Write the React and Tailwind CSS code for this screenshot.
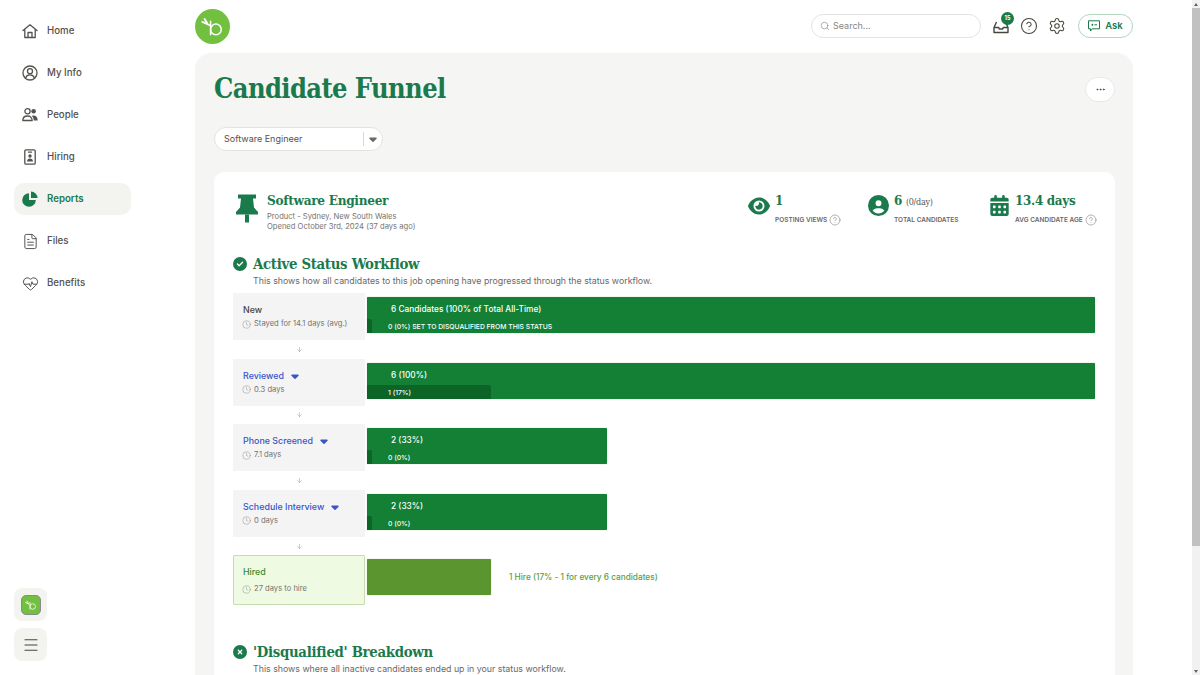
import { ArrowDown, Clock, Search, CircleHelp, Settings, Ellipsis, Menu, FileText, HeartPulse } from "lucide-react";
import { FaEye, FaCircleUser, FaCalendarDays, FaCircleCheck, FaCircleXmark, FaCaretDown } from "react-icons/fa6";

const SERIF = "font-['DejaVu_Serif_Condensed','DejaVu_Serif',serif]";

const Logo = ({ size }) => (
  <svg width={size} height={size} viewBox="0 0 36 36">
    <circle cx="18" cy="18" r="18" fill="#73c041" />
    <path d="M16 12v15" stroke="#fff" strokeWidth="1.5" fill="none" />
    <circle cx="21.5" cy="21" r="5.5" stroke="#fff" strokeWidth="1.5" fill="none" />
    <path d="M14.6 16.5 7.5 13.2M12.7 14.7 9.8 10.2" stroke="#fff" strokeWidth="1.8" strokeLinecap="round" />
  </svg>
);

const Outline = ({ children }) => (
  <svg width="16" height="16" viewBox="0 0 16 16" fill="none" stroke="currentColor" strokeWidth="1.3" strokeLinejoin="round" strokeLinecap="round">
    {children}
  </svg>
);

const nav = [
  {
    label: "Home",
    icon: (
      <Outline>
        <path d="M1 7.5 8 1.8l7 5.7M2.8 6.3V14.5h10.4V6.3M6 14.5V9.5h4v5" />
      </Outline>
    ),
  },
  {
    label: "My Info",
    icon: (
      <Outline>
        <circle cx="8" cy="8" r="7" />
        <circle cx="8" cy="6.2" r="2.5" />
        <path d="M3.5 12.9c.8-2 2.5-3 4.5-3s3.7 1 4.5 3" />
      </Outline>
    ),
  },
  {
    label: "People",
    icon: (
      <Outline>
        <circle cx="5.5" cy="4.2" r="2.6" />
        <path d="M.8 13.5c0-3 2-4.5 4.7-4.5s4.7 1.5 4.7 4.5z" />
        <circle cx="11.6" cy="4.2" r="2.3" fill="currentColor" stroke="none" />
        <path d="M11.5 8.6c2.4 0 4.2 1.6 4.2 4.9h-4c0-2-.5-3.4-1.8-4.5.5-.3 1-.4 1.6-.4z" fill="currentColor" stroke="none" />
      </Outline>
    ),
  },
  {
    label: "Hiring",
    icon: (
      <Outline>
        <rect x="2.8" y="0.8" width="10.4" height="14.4" rx="1.2" />
        <path d="M6.5 3.2h3" />
        <circle cx="8" cy="7" r="1.7" fill="currentColor" stroke="none" />
        <path d="M5 12.5c0-2 1.3-3 3-3s3 1 3 3z" fill="currentColor" stroke="none" />
      </Outline>
    ),
  },
  {
    label: "Reports",
    icon: (
      <svg width="16" height="16" viewBox="0 0 16 16" fill="currentColor">
        <path d="M7 2.2A6.8 6.8 0 1 0 13.8 9H7z" />
        <path d="M9 .5A6.5 6.5 0 0 1 15.5 7H9z" />
      </svg>
    ),
    active: true,
  },
  { label: "Files", icon: <FileText size={17} strokeWidth={1.4} className="-mx-[0.5px]" /> },
  { label: "Benefits", icon: <HeartPulse size={17} strokeWidth={1.4} className="-mx-[0.5px]" /> },
];

const rows = [
  { name: "New", time: "Stayed for 14.1 days (avg.)", width: 728, top: "6 Candidates (100% of Total All-Time)", bottom: "0 (0%) SET TO DISQUALIFIED FROM THIS STATUS", band: 5 },
  { name: "Reviewed", link: true, time: "0.3 days", width: 728, top: "6 (100%)", bottom: "1 (17%)", band: 124 },
  { name: "Phone Screened", link: true, time: "7.1 days", width: 240, top: "2 (33%)", bottom: "0 (0%)", band: 5 },
  { name: "Schedule Interview", link: true, time: "0 days", width: 240, top: "2 (33%)", bottom: "0 (0%)", band: 5 },
];

const Stat = ({ icon, value, extra, label, help, className }) => (
  <div className={`flex gap-[5px] ${className}`}>
    <div className="text-[#1b7a4c] pt-[3px]">{icon}</div>
    <div>
      <div className={`${SERIF} h-[18px] text-[13.3px] leading-[18px] font-bold text-[#1b7a4c] whitespace-nowrap tracking-[-0.3px]`}>
        {value} {extra && <span className="text-[9px] font-normal text-[#555]">{extra}</span>}
      </div>
      <div className="mt-[6px] h-[10px] flex items-center gap-[2px] text-[6.5px] font-semibold text-[#6b6866] whitespace-nowrap">
        {label}
        {help && <CircleHelp size={12} strokeWidth={1} className="-mt-[2px]" />}
      </div>
    </div>
  </div>
);

const SectionTitle = ({ icon, title, desc }) => (
  <div>
    <div className="flex items-center gap-[6px]">
      <span className="text-[#1b7a4c]">{icon}</span>
      <h2 className={`${SERIF} text-[14.8px] leading-[20px] font-bold text-[#1b7a4c] tracking-[-0.3px]`}>{title}</h2>
    </div>
    <p className="ml-[20px] text-[8.8px] leading-[13px] text-[#6b6866]">{desc}</p>
  </div>
);

const TimeLine = ({ children, className }) => (
  <div className={`flex items-center gap-[3px] -ml-[1px] text-[7.6px] leading-[12px] text-[#77736f] ${className}`}>
    <Clock size={9} strokeWidth={1} />
    {children}
  </div>
);

const FunnelRow = ({ row }) => (
  <div className="flex gap-[2px]">
    <div className="w-[132px] h-[47px] shrink-0 bg-[#f4f4f4] pl-[10px] pt-[11px]">
      <div className={`flex items-center gap-[5px] text-[8.9px] leading-[12px] font-medium ${row.link ? "text-[#3a55c8]" : "text-[#48453f]"}`}>
        {row.name}
        {row.link && <FaCaretDown size={12} />}
      </div>
      <TimeLine className="mt-[2px]">{row.time}</TimeLine>
    </div>
    <div className="pt-[4px]">
      <div className="relative h-[36px] rounded-[1px] bg-[#138036] text-white shadow-[0_0_1px_#6fa57f]" style={{ width: row.width }}>
        <div className="pl-[24px] pt-[6px] text-[8.3px] leading-[12px] font-medium">{row.top}</div>
        <div className="absolute left-0 bottom-0 h-[14px] rounded-tr-[2px] bg-[#0d6427]" style={{ width: row.band }} />
        <div className="absolute left-[21px] bottom-0 text-[6.8px] leading-[13px] font-medium whitespace-nowrap">{row.bottom}</div>
      </div>
    </div>
  </div>
);

const Arrow = () => (
  <div className="w-[132px] h-[18.6px] flex items-center justify-center text-[#8b8b8b]">
    <ArrowDown size={7} strokeWidth={1.5} />
  </div>
);

export default function App() {
  return (
    <div className="flex w-[1200px] h-[675px] overflow-hidden bg-white font-['Inter',sans-serif]">
      <aside className="w-[195px] shrink-0 flex flex-col justify-between px-[14px] pt-[15px] pb-[14px]">
        <nav className="flex flex-col gap-[10px]">
          {nav.map((item) => (
            <div
              key={item.label}
              className={`w-[117px] h-[32px] flex items-center gap-[9px] pl-[8px] rounded-[10px] text-[9.7px] ${item.active ? "bg-[#f3f3f0] text-[#1b7a4c] font-semibold" : "text-[#55514d] font-medium"}`}
            >
              {item.icon}
              {item.label}
            </div>
          ))}
        </nav>
        <div className="flex flex-col gap-[7px]">
          <div className="w-[33px] h-[33px] rounded-[8px] bg-[#f3f3f0] flex items-center justify-center">
            <div className="w-[20px] h-[20px] rounded-[5px] bg-[#73c041] border border-[#8a8a8a] overflow-hidden flex items-center justify-center">
              <Logo size={18} />
            </div>
          </div>
          <div className="w-[33px] h-[33px] rounded-[8px] bg-[#f3f3f0] flex items-center justify-center text-[#48453f]">
            <Menu size={18} strokeWidth={1.5} />
          </div>
        </div>
      </aside>

      <main className="w-[938px] shrink-0 flex flex-col">
        <header className="h-[53px] shrink-0 flex items-center">
          <Logo size={35} />
          <div className="ml-auto flex items-center -mt-[1px]">
            <div className="w-[170px] h-[24px] rounded-full border border-[#e3e3e0] flex items-center gap-[3px] pl-[8px] text-[9px] text-[#8a8682]">
              <Search size={10} strokeWidth={1.5} />
              Search...
            </div>
            <div className="relative ml-[11px] text-[#48453f]">
              <svg width="18" height="18" viewBox="0 0 18 18" fill="none" stroke="currentColor" strokeWidth="1.4" strokeLinejoin="round" className="block">
                <path d="M4.5 5 2 10.5V15.5h14v-5L14 6M2 10.5h4.5l1 1.5h3l1-1.5H16" />
              </svg>
              <span className="absolute -top-[5px] left-[9px] w-[13px] h-[13px] rounded-full bg-[#1b7a4c] text-white text-[5.5px] font-bold flex items-center justify-center">15</span>
            </div>
            <CircleHelp size={18} strokeWidth={1.4} className="ml-[10px] text-[#48453f]" />
            <Settings size={18} strokeWidth={1.4} className="ml-[10px] text-[#48453f]" />
            <div className="ml-[12px] w-[55px] h-[24px] rounded-full border border-[#b5d5c0] flex items-center justify-center gap-[5px] text-[#1b7a4c] text-[9.5px] font-semibold">
              <svg width="12" height="12" viewBox="0 0 12 12" fill="none" stroke="currentColor" strokeWidth="1">
                <path d="M.5.8h11v8H4.2L2.5 11V8.8h-2z" />
                <path d="M6.5 4.8h2.500M3.500 4.800h1.800M4.400 3.800v2" />
              </svg>
              Ask
            </div>
          </div>
        </header>

        <section className="flex-1 rounded-t-[16px] bg-[#f5f5f3] pl-[19px] pr-[18px] pt-[24px]">
          <div className="h-[25px] flex items-center justify-between">
            <h1 className={`${SERIF} -mt-[3px] text-[27px] font-bold text-[#1b7a4c] leading-none tracking-[-0.6px]`}>Candidate Funnel</h1>
            <div className="w-[30px] h-[25px] rounded-full bg-white border border-[#e8e8e6] flex items-center justify-center text-[#48453f]">
              <Ellipsis size={11} />
            </div>
          </div>

          <div className="mt-[25px] w-[169px] h-[24px] rounded-full bg-white border border-[#e3e3e0] flex items-center pl-[9px] text-[9px] text-[#55514d]">
            <span className="flex-1">Software Engineer</span>
            <span className="h-[14px] w-[19px] border-l border-[#d8d8d5] flex items-center justify-center">
              <FaCaretDown size={12} className="text-[#6b6866]" />
            </span>
          </div>

          <div className="mt-[21px] rounded-t-[10px] bg-white pl-[19px] pr-[20px] pt-[20px] h-[503px] overflow-hidden">
            <div className="flex justify-between">
              <div className="flex gap-[9px] pl-[3px]">
                <svg width="22" height="29" viewBox="0 0 22 29" fill="#1b7a4c" className="shrink-0 mt-[2px]">
                  <path d="M2 .5h18v4h-3l1 9 4 4.500v2.500H0V18l4-4.500 1-9H2z" />
                  <path d="M9 20.500h4V28.500H9z" />
                </svg>
                <div>
                  <div className={`${SERIF} text-[13.5px] leading-[16px] font-bold text-[#1b7a4c] tracking-[-0.3px]`}>Software Engineer</div>
                  <div className="mt-[4px] text-[7.6px] leading-[10px] text-[#77736f]">Product - Sydney, New South Wales</div>
                  <div className="text-[7.6px] leading-[10px] text-[#77736f]">Opened October 3rd, 2024 (37 days ago)</div>
                </div>
              </div>
              <div className="flex">
                <Stat className="w-[120px]" icon={<FaEye size={22} />} value="1" label="POSTING VIEWS" help />
                <Stat className="w-[121px]" icon={<FaCircleUser size={21} />} value="6" extra="(0/day)" label="TOTAL CANDIDATES" />
                <Stat className="w-[106px]" icon={<FaCalendarDays size={21} />} value="13.4 days" label="AVG CANDIDATE AGE" help />
              </div>
            </div>

            <div className="mt-[22px]">
              <SectionTitle
                icon={<FaCircleCheck size={14} />}
                title="Active Status Workflow"
                desc="This shows how all candidates to this job opening have progressed through the status workflow."
              />
            </div>

            <div className="mt-[6px]">
              {rows.map((row) => (
                <div key={row.name}>
                  <FunnelRow row={row} />
                  <Arrow />
                </div>
              ))}
              <div className="flex gap-[2px]">
                <div className="w-[132px] h-[50px] shrink-0 bg-[#eefbe2] border border-[#c5dcae] rounded-[1px] pl-[9px] pt-[10px]">
                  <div className="text-[8.9px] leading-[12px] font-medium text-[#3f8a30]">Hired</div>
                  <TimeLine className="mt-[5px]">27 days to hire</TimeLine>
                </div>
                <div className="pt-[4px] flex">
                  <div className="w-[124px] h-[36px] rounded-[1px] bg-[#5a952f] shadow-[0_0_1px_#8ab56a]" />
                  <div className="ml-[18px] h-[36px] flex items-center text-[8.25px] font-medium text-[#5a9e45]">1 Hire (17% - 1 for every 6 candidates)</div>
                </div>
              </div>
            </div>

            <div className="mt-[37px]">
              <SectionTitle
                icon={<FaCircleXmark size={14} />}
                title="'Disqualified' Breakdown"
                desc="This shows where all inactive candidates ended up in your status workflow."
              />
            </div>
          </div>
        </section>
      </main>

      <div className="ml-auto w-[8px] h-full bg-[#f1f1f1] flex flex-col items-center">
        <div className="h-[8px] flex items-center">
          <span className="border-x-[2.5px] border-x-transparent border-b-[3px] border-b-[#606060]" />
        </div>
        <div className="w-full h-[538px] bg-[#c1c1c1]" />
        <div className="mt-auto h-[8px] flex items-center">
          <span className="border-x-[2.5px] border-x-transparent border-t-[3px] border-t-[#606060]" />
        </div>
      </div>
    </div>
  );
}
